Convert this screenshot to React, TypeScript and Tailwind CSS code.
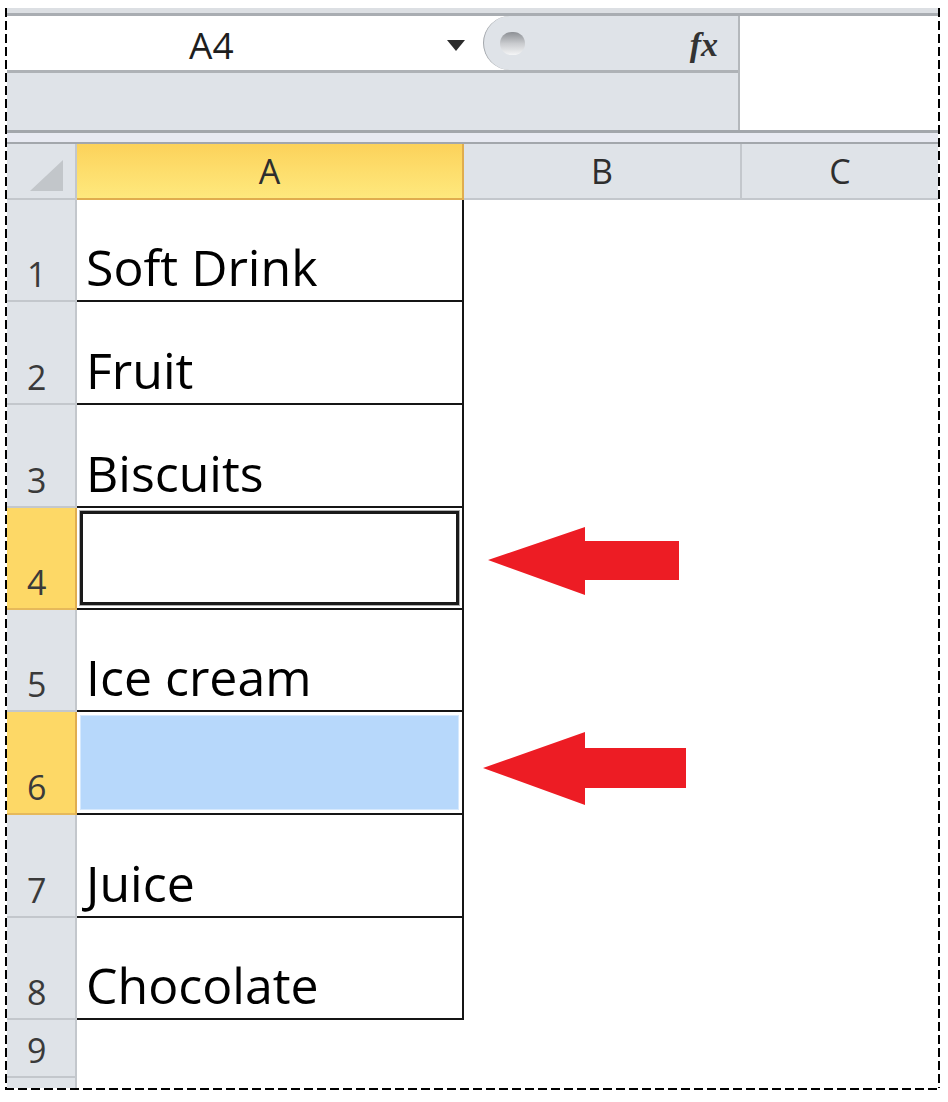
import React from "react";

const rowHeights = [102, 103, 103, 102, 102, 103, 103, 102];
const items = ["Soft Drink", "Fruit", "Biscuits", "", "Ice cream", "", "Juice", "Chocolate"];

function RowHeader({ n, active, h }: { n: number; active?: boolean; h: number }) {
  return (
    <div
      className={
        "w-[70px] shrink-0 flex items-end pl-[20px] pb-[3px] border-r-2 border-b-2 text-[34px] leading-[1.36] text-[#3a3a3a] " +
        (active
          ? "bg-[#fdd866] border-r-[#e0ad4e] border-b-[#e6b95a]"
          : "bg-[#dfe3e8] border-r-[#c3c7cc] border-b-[#c3c7cc]")
      }
      style={{ height: h }}
    >
      {n}
    </div>
  );
}

export default function App() {
  return (
    <div className="relative w-[948px] h-[1102px] bg-white font-['Open_Sans','Noto_Sans',sans-serif] overflow-hidden">
      <div className="ml-[5px] mt-[8px] w-[935px] h-[1082px] flex flex-col">
        <div className="flex-1 flex min-h-0">
          {/* left dashed edge */}
          <div className="w-[2px] shrink-0 bg-[repeating-linear-gradient(to_bottom,#000_0_9px,transparent_9px_13px)]" />
          <div className="flex-1 flex flex-col min-w-0">
            {/* top bar */}
            <div className="h-[8px] shrink-0 bg-[#dcdfe3] border-b-[3px] border-[#a9adb2]" />
            {/* formula bar */}
            <div className="h-[114px] shrink-0 flex">
              <div className="w-[731px] flex flex-col">
                <div className="h-[57px] flex bg-white border-b-[3px] border-[#aeb2b6]">
                  <div className="w-[476px] flex items-center relative">
                    <span className="pl-[182px] text-[37px] leading-none text-[#1e1e1e] pt-[2px]">A4</span>
                    <svg className="absolute left-[440px] top-[24px]" width="18" height="11" viewBox="0 0 18 11">
                      <polygon points="0,0 18,0 9,11" fill="#2b2b2b" />
                    </svg>
                  </div>
                  <div className="flex-1 bg-[#dfe3e8] rounded-l-[30px] border-l border-[#a3a7ac] flex items-center justify-between pl-[16px] pr-[20px]">
                    <div className="w-[25px] h-[23px] rounded-full bg-gradient-to-b from-[#8d9095] via-[#c9cbce] to-[#f4f5f6]" />
                    <span className="font-['Liberation_Serif',serif] italic font-bold text-[34px] leading-none text-[#333] pt-[4px]">
                      fx
                    </span>
                  </div>
                </div>
                <div className="flex-1 bg-[#dfe3e8]" />
              </div>
              <div className="flex-1 bg-white border-l-2 border-[#b4b8bc]" />
            </div>
            <div className="h-[3px] shrink-0 bg-[#a3a7ac]" />
            <div className="h-[9px] shrink-0 bg-[#e8eaf2]" />
            <div className="h-[2px] shrink-0 bg-[#a3a7ac]" />
            {/* column headers */}
            <div className="h-[56px] shrink-0 flex text-[34px] text-[#2e2e2e]">
              <div className="w-[70px] shrink-0 bg-[#dfe3e8] border-r-2 border-b-2 border-[#c3c7cc] relative">
                <svg className="absolute left-[23px] top-[16px]" width="33" height="31" viewBox="0 0 33 31">
                  <polygon points="33,0 33,31 0,31" fill="#c2c6ca" />
                </svg>
              </div>
              <div className="w-[387px] shrink-0 bg-gradient-to-b from-[#fcd25a] to-[#fee97d] border-r-2 border-b-2 border-[#e0ad4e] flex items-center justify-center">
                A
              </div>
              <div className="w-[278px] shrink-0 bg-[#dfe3e8] border-r-2 border-b-2 border-[#c3c7cc] flex items-center justify-center">
                B
              </div>
              <div className="flex-1 bg-[#dfe3e8] border-b-2 border-[#c3c7cc] flex items-center justify-center">
                C
              </div>
            </div>
            {/* rows */}
            {items.map((t, i) => {
              const h = rowHeights[i];
              const active = i === 3 || i === 5;
              return (
                <div key={i} className="flex shrink-0" style={{ height: h }}>
                  <RowHeader n={i + 1} active={active} h={h} />
                  <div className="w-[387px] shrink-0 border-r-2 border-b-2 border-[#151515]">
                    {i === 3 ? (
                      <div className="h-full p-[3px]">
                        <div className="h-full border-[3px] border-[#1a1a1a] outline outline-1 outline-[#b0b0b0]" />
                      </div>
                    ) : i === 5 ? (
                      <div className="h-full p-[3px]">
                        <div className="h-full bg-[#b7d8fb] border border-[#d6e9fd]" />
                      </div>
                    ) : (
                      <div className="h-full flex items-end pl-[9px] text-[50px] leading-[1.3] text-black">{t}</div>
                    )}
                  </div>
                  <div className="flex-1 bg-white" />
                </div>
              );
            })}
            <div className="flex shrink-0 h-[58px]">
              <RowHeader n={9} h={58} />
              <div className="flex-1 bg-white" />
            </div>
            <div className="flex-1 flex">
              <div className="w-[70px] shrink-0 bg-[#dfe3e8] border-r-2 border-[#c3c7cc]" />
              <div className="flex-1 bg-white" />
            </div>
          </div>
          {/* right dashed edge */}
          <div className="w-[2px] shrink-0 bg-[repeating-linear-gradient(to_bottom,#000_0_9px,transparent_9px_13px)]" />
        </div>
        {/* bottom dashed edge */}
        <div className="h-[2px] shrink-0 bg-[repeating-linear-gradient(to_right,#000_0_9px,transparent_9px_13px)]" />
      </div>
      <svg className="absolute left-0 top-0 pointer-events-none" width="948" height="1102" viewBox="0 0 948 1102">
        <polygon points="488,560 585,527 585,541 679,541 679,580 585,580 585,595" fill="#ed1c24" />
        <polygon points="483,768 585,732 585,748 686,748 686,788 585,788 585,805" fill="#ed1c24" />
      </svg>
    </div>
  );
}
